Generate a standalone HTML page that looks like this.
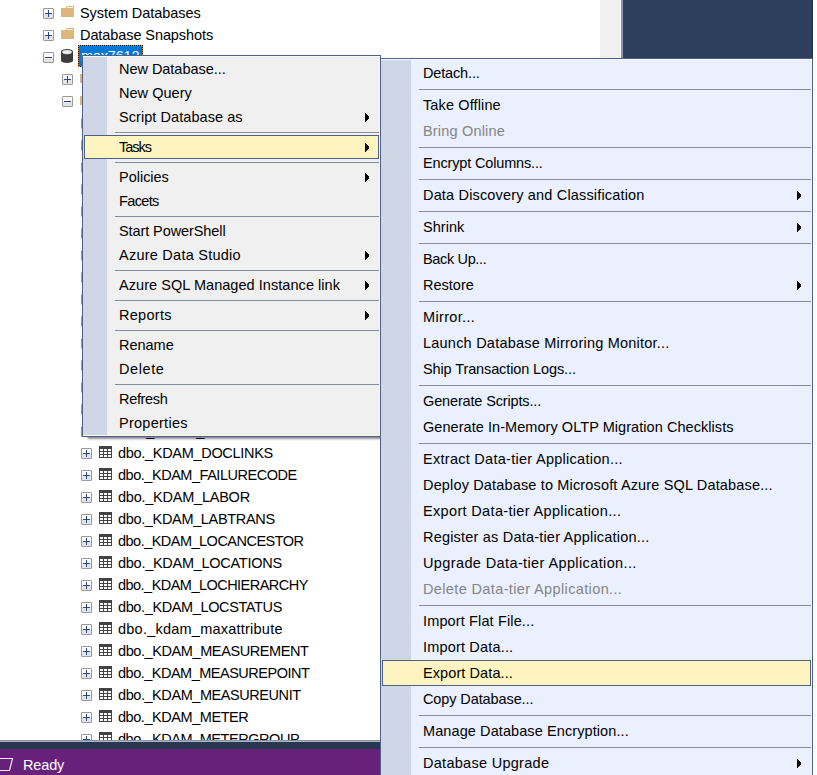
<!DOCTYPE html>
<html><head><meta charset="utf-8"><title>SSMS context menu</title><style>
*{margin:0;padding:0;box-sizing:border-box}
html,body{width:817px;height:775px;overflow:hidden;background:#fff}
body{position:relative;font-family:"Liberation Sans", sans-serif;font-size:14.5px;color:#000}
.a{position:absolute}
.t{position:absolute;white-space:nowrap;line-height:22px;height:22px}
.box{position:absolute;width:11px;height:11px;border:1px solid #999;border-radius:1px;background:linear-gradient(#fff 0,#fff 45%,#e4e4e4 55%,#e4e4e4 100%)}
.box i{position:absolute;background:#2a4690}
.fold{position:absolute;width:13px;height:11px}
.mi{position:absolute;white-space:nowrap}
.sep{position:absolute;height:1px;background:#838c9e}
.arr{position:absolute;width:0;height:0;border-top:4.5px solid transparent;border-bottom:4.5px solid transparent;border-left:5px solid #000}
</style></head>
<body>
<div class="a" style="left:0;top:0;width:600px;height:740px;background:#fff"></div>
<div class="a" style="left:600px;top:0;width:20px;height:740px;background:#f0f0f0"></div>
<div class="a" style="left:620px;top:0;width:1px;height:740px;background:#fff"></div>
<div class="a" style="left:621px;top:0;width:1px;height:740px;background:#878d98"></div>
<div class="a" style="left:622px;top:0;width:1px;height:740px;background:#8d9cc0"></div>
<div class="a" style="left:623px;top:0;width:190px;height:740px;background:#2e3f5e"></div>
<div class="a" style="left:812px;top:0;width:1px;height:58px;background:#213252"></div>
<div class="a" style="left:813px;top:0;width:4px;height:775px;background:#fff"></div>
<div class="a" style="left:0;top:740px;width:813px;height:1px;background:#8c929d"></div>
<div class="a" style="left:0;top:741px;width:813px;height:1px;background:#a9b5cb"></div>
<div class="a" style="left:0;top:742px;width:813px;height:7px;background:#283852"></div>
<div class="a" style="left:0;top:749px;width:813px;height:26px;background:#68217a"></div>
<svg class="a" style="left:0;top:757px" width="16" height="16"><path d="M-2 1.5 H12.5 L9.5 13.5 H-2" fill="none" stroke="#f3e6f6" stroke-width="1.2"/></svg>
<div class="t" style="left:23px;top:754px;color:#fff;letter-spacing:-0.156px;">Ready</div>
<div class="a" style="left:0;top:0;width:600px;height:740px;overflow:hidden">
<div class="box" style="left:43px;top:8px"><i style="left:1px;top:4px;width:7px;height:1px"></i><i style="left:4px;top:1px;width:1px;height:7px"></i></div>
<svg class="a" style="left:61px;top:6px" width="13" height="11"><path d="M0 2 H4.6 L5.6 0 H13 V11 H0 Z" fill="#dcb67a"/><rect x="6" y="1" width="6" height="1" fill="#fbf6ee"/></svg>
<div class="t" style="left:80px;top:2px;letter-spacing:-0.071px;">System Databases</div>
<div class="box" style="left:43px;top:30px"><i style="left:1px;top:4px;width:7px;height:1px"></i><i style="left:4px;top:1px;width:1px;height:7px"></i></div>
<svg class="a" style="left:61px;top:28px" width="13" height="11"><path d="M0 2 H4.6 L5.6 0 H13 V11 H0 Z" fill="#dcb67a"/><rect x="6" y="1" width="6" height="1" fill="#fbf6ee"/></svg>
<div class="t" style="left:80px;top:24px;letter-spacing:-0.086px;">Database Snapshots</div>
<div class="box" style="left:43px;top:52px"><i style="left:1px;top:4px;width:7px;height:1px"></i></div>
<svg class="a" style="left:61px;top:49px" width="12" height="14"><path d="M0 2.6 A6 2.6 0 0 1 12 2.6 V11.4 A6 2.6 0 0 1 0 11.4 Z" fill="#3c3c3c"/><ellipse cx="6" cy="3.1" rx="4.9" ry="2.1" fill="#ececec"/></svg>
<div class="a" style="left:78px;top:45px;width:65px;height:22px;background:#0078d7"></div>
<div class="a" style="left:78px;top:45px;width:65px;height:1px;background:repeating-linear-gradient(to right,#000 0,#000 1px,#ff8c00 1px,#ff8c00 2px)"></div>
<div class="a" style="left:78px;top:66px;width:65px;height:1px;background:repeating-linear-gradient(to right,#000 0,#000 1px,#ff8c00 1px,#ff8c00 2px)"></div>
<div class="a" style="left:78px;top:45px;width:1px;height:22px;background:repeating-linear-gradient(to bottom,#000 0,#000 1px,#ff8c00 1px,#ff8c00 2px)"></div>
<div class="a" style="left:142px;top:45px;width:1px;height:22px;background:repeating-linear-gradient(to bottom,#000 0,#000 1px,#ff8c00 1px,#ff8c00 2px)"></div>
<div class="t" style="left:81px;top:45px;color:#fff;letter-spacing:-0.2px">max7612</div>
<div class="box" style="left:62px;top:74px"><i style="left:1px;top:4px;width:7px;height:1px"></i><i style="left:4px;top:1px;width:1px;height:7px"></i></div>
<svg class="a" style="left:80px;top:72px" width="13" height="11"><path d="M0 2 H4.6 L5.6 0 H13 V11 H0 Z" fill="#dcb67a"/><rect x="6" y="1" width="6" height="1" fill="#fbf6ee"/></svg>
<div class="box" style="left:62px;top:96px"><i style="left:1px;top:4px;width:7px;height:1px"></i></div>
<svg class="a" style="left:80px;top:94px" width="13" height="11"><path d="M0 2 H4.6 L5.6 0 H13 V11 H0 Z" fill="#dcb67a"/><rect x="6" y="1" width="6" height="1" fill="#fbf6ee"/></svg>
<div class="box" style="left:81px;top:118px"><i style="left:1px;top:4px;width:7px;height:1px"></i><i style="left:4px;top:1px;width:1px;height:7px"></i></div>
<svg class="a" style="left:99px;top:116px" width="13" height="12"><rect width="13" height="12" fill="#424242"/><rect x="1" y="3" width="3" height="2" fill="#fff"/><rect x="5" y="3" width="3" height="2" fill="#fff"/><rect x="9" y="3" width="3" height="2" fill="#fff"/><rect x="1" y="6" width="3" height="2" fill="#fff"/><rect x="5" y="6" width="3" height="2" fill="#fff"/><rect x="9" y="6" width="3" height="2" fill="#fff"/><rect x="1" y="9" width="3" height="2" fill="#fff"/><rect x="5" y="9" width="3" height="2" fill="#fff"/><rect x="9" y="9" width="3" height="2" fill="#fff"/></svg>
<div class="t" style="left:118px;top:112px;">System Tables</div>
<div class="box" style="left:81px;top:140px"><i style="left:1px;top:4px;width:7px;height:1px"></i><i style="left:4px;top:1px;width:1px;height:7px"></i></div>
<svg class="a" style="left:99px;top:138px" width="13" height="12"><rect width="13" height="12" fill="#424242"/><rect x="1" y="3" width="3" height="2" fill="#fff"/><rect x="5" y="3" width="3" height="2" fill="#fff"/><rect x="9" y="3" width="3" height="2" fill="#fff"/><rect x="1" y="6" width="3" height="2" fill="#fff"/><rect x="5" y="6" width="3" height="2" fill="#fff"/><rect x="9" y="6" width="3" height="2" fill="#fff"/><rect x="1" y="9" width="3" height="2" fill="#fff"/><rect x="5" y="9" width="3" height="2" fill="#fff"/><rect x="9" y="9" width="3" height="2" fill="#fff"/></svg>
<div class="t" style="left:118px;top:134px;">FileTables</div>
<div class="box" style="left:81px;top:162px"><i style="left:1px;top:4px;width:7px;height:1px"></i><i style="left:4px;top:1px;width:1px;height:7px"></i></div>
<svg class="a" style="left:99px;top:160px" width="13" height="12"><rect width="13" height="12" fill="#424242"/><rect x="1" y="3" width="3" height="2" fill="#fff"/><rect x="5" y="3" width="3" height="2" fill="#fff"/><rect x="9" y="3" width="3" height="2" fill="#fff"/><rect x="1" y="6" width="3" height="2" fill="#fff"/><rect x="5" y="6" width="3" height="2" fill="#fff"/><rect x="9" y="6" width="3" height="2" fill="#fff"/><rect x="1" y="9" width="3" height="2" fill="#fff"/><rect x="5" y="9" width="3" height="2" fill="#fff"/><rect x="9" y="9" width="3" height="2" fill="#fff"/></svg>
<div class="t" style="left:118px;top:156px;">External Tables</div>
<div class="box" style="left:81px;top:184px"><i style="left:1px;top:4px;width:7px;height:1px"></i><i style="left:4px;top:1px;width:1px;height:7px"></i></div>
<svg class="a" style="left:99px;top:182px" width="13" height="12"><rect width="13" height="12" fill="#424242"/><rect x="1" y="3" width="3" height="2" fill="#fff"/><rect x="5" y="3" width="3" height="2" fill="#fff"/><rect x="9" y="3" width="3" height="2" fill="#fff"/><rect x="1" y="6" width="3" height="2" fill="#fff"/><rect x="5" y="6" width="3" height="2" fill="#fff"/><rect x="9" y="6" width="3" height="2" fill="#fff"/><rect x="1" y="9" width="3" height="2" fill="#fff"/><rect x="5" y="9" width="3" height="2" fill="#fff"/><rect x="9" y="9" width="3" height="2" fill="#fff"/></svg>
<div class="t" style="left:118px;top:178px;">Graph Tables</div>
<div class="box" style="left:81px;top:206px"><i style="left:1px;top:4px;width:7px;height:1px"></i><i style="left:4px;top:1px;width:1px;height:7px"></i></div>
<svg class="a" style="left:99px;top:204px" width="13" height="12"><rect width="13" height="12" fill="#424242"/><rect x="1" y="3" width="3" height="2" fill="#fff"/><rect x="5" y="3" width="3" height="2" fill="#fff"/><rect x="9" y="3" width="3" height="2" fill="#fff"/><rect x="1" y="6" width="3" height="2" fill="#fff"/><rect x="5" y="6" width="3" height="2" fill="#fff"/><rect x="9" y="6" width="3" height="2" fill="#fff"/><rect x="1" y="9" width="3" height="2" fill="#fff"/><rect x="5" y="9" width="3" height="2" fill="#fff"/><rect x="9" y="9" width="3" height="2" fill="#fff"/></svg>
<div class="t" style="left:118px;top:200px;">dbo._KDAM_ASSET</div>
<div class="box" style="left:81px;top:228px"><i style="left:1px;top:4px;width:7px;height:1px"></i><i style="left:4px;top:1px;width:1px;height:7px"></i></div>
<svg class="a" style="left:99px;top:226px" width="13" height="12"><rect width="13" height="12" fill="#424242"/><rect x="1" y="3" width="3" height="2" fill="#fff"/><rect x="5" y="3" width="3" height="2" fill="#fff"/><rect x="9" y="3" width="3" height="2" fill="#fff"/><rect x="1" y="6" width="3" height="2" fill="#fff"/><rect x="5" y="6" width="3" height="2" fill="#fff"/><rect x="9" y="6" width="3" height="2" fill="#fff"/><rect x="1" y="9" width="3" height="2" fill="#fff"/><rect x="5" y="9" width="3" height="2" fill="#fff"/><rect x="9" y="9" width="3" height="2" fill="#fff"/></svg>
<div class="t" style="left:118px;top:222px;">dbo._KDAM_ASSETATTRIBUTE</div>
<div class="box" style="left:81px;top:250px"><i style="left:1px;top:4px;width:7px;height:1px"></i><i style="left:4px;top:1px;width:1px;height:7px"></i></div>
<svg class="a" style="left:99px;top:248px" width="13" height="12"><rect width="13" height="12" fill="#424242"/><rect x="1" y="3" width="3" height="2" fill="#fff"/><rect x="5" y="3" width="3" height="2" fill="#fff"/><rect x="9" y="3" width="3" height="2" fill="#fff"/><rect x="1" y="6" width="3" height="2" fill="#fff"/><rect x="5" y="6" width="3" height="2" fill="#fff"/><rect x="9" y="6" width="3" height="2" fill="#fff"/><rect x="1" y="9" width="3" height="2" fill="#fff"/><rect x="5" y="9" width="3" height="2" fill="#fff"/><rect x="9" y="9" width="3" height="2" fill="#fff"/></svg>
<div class="t" style="left:118px;top:244px;">dbo._KDAM_ASSETMETER</div>
<div class="box" style="left:81px;top:272px"><i style="left:1px;top:4px;width:7px;height:1px"></i><i style="left:4px;top:1px;width:1px;height:7px"></i></div>
<svg class="a" style="left:99px;top:270px" width="13" height="12"><rect width="13" height="12" fill="#424242"/><rect x="1" y="3" width="3" height="2" fill="#fff"/><rect x="5" y="3" width="3" height="2" fill="#fff"/><rect x="9" y="3" width="3" height="2" fill="#fff"/><rect x="1" y="6" width="3" height="2" fill="#fff"/><rect x="5" y="6" width="3" height="2" fill="#fff"/><rect x="9" y="6" width="3" height="2" fill="#fff"/><rect x="1" y="9" width="3" height="2" fill="#fff"/><rect x="5" y="9" width="3" height="2" fill="#fff"/><rect x="9" y="9" width="3" height="2" fill="#fff"/></svg>
<div class="t" style="left:118px;top:266px;">dbo._KDAM_ASSETSPEC</div>
<div class="box" style="left:81px;top:294px"><i style="left:1px;top:4px;width:7px;height:1px"></i><i style="left:4px;top:1px;width:1px;height:7px"></i></div>
<svg class="a" style="left:99px;top:292px" width="13" height="12"><rect width="13" height="12" fill="#424242"/><rect x="1" y="3" width="3" height="2" fill="#fff"/><rect x="5" y="3" width="3" height="2" fill="#fff"/><rect x="9" y="3" width="3" height="2" fill="#fff"/><rect x="1" y="6" width="3" height="2" fill="#fff"/><rect x="5" y="6" width="3" height="2" fill="#fff"/><rect x="9" y="6" width="3" height="2" fill="#fff"/><rect x="1" y="9" width="3" height="2" fill="#fff"/><rect x="5" y="9" width="3" height="2" fill="#fff"/><rect x="9" y="9" width="3" height="2" fill="#fff"/></svg>
<div class="t" style="left:118px;top:288px;">dbo._KDAM_ASSETSTATUS</div>
<div class="box" style="left:81px;top:316px"><i style="left:1px;top:4px;width:7px;height:1px"></i><i style="left:4px;top:1px;width:1px;height:7px"></i></div>
<svg class="a" style="left:99px;top:314px" width="13" height="12"><rect width="13" height="12" fill="#424242"/><rect x="1" y="3" width="3" height="2" fill="#fff"/><rect x="5" y="3" width="3" height="2" fill="#fff"/><rect x="9" y="3" width="3" height="2" fill="#fff"/><rect x="1" y="6" width="3" height="2" fill="#fff"/><rect x="5" y="6" width="3" height="2" fill="#fff"/><rect x="9" y="6" width="3" height="2" fill="#fff"/><rect x="1" y="9" width="3" height="2" fill="#fff"/><rect x="5" y="9" width="3" height="2" fill="#fff"/><rect x="9" y="9" width="3" height="2" fill="#fff"/></svg>
<div class="t" style="left:118px;top:310px;">dbo._KDAM_CLASSSPEC</div>
<div class="box" style="left:81px;top:338px"><i style="left:1px;top:4px;width:7px;height:1px"></i><i style="left:4px;top:1px;width:1px;height:7px"></i></div>
<svg class="a" style="left:99px;top:336px" width="13" height="12"><rect width="13" height="12" fill="#424242"/><rect x="1" y="3" width="3" height="2" fill="#fff"/><rect x="5" y="3" width="3" height="2" fill="#fff"/><rect x="9" y="3" width="3" height="2" fill="#fff"/><rect x="1" y="6" width="3" height="2" fill="#fff"/><rect x="5" y="6" width="3" height="2" fill="#fff"/><rect x="9" y="6" width="3" height="2" fill="#fff"/><rect x="1" y="9" width="3" height="2" fill="#fff"/><rect x="5" y="9" width="3" height="2" fill="#fff"/><rect x="9" y="9" width="3" height="2" fill="#fff"/></svg>
<div class="t" style="left:118px;top:332px;">dbo._KDAM_CLASSSTRUCTURE</div>
<div class="box" style="left:81px;top:360px"><i style="left:1px;top:4px;width:7px;height:1px"></i><i style="left:4px;top:1px;width:1px;height:7px"></i></div>
<svg class="a" style="left:99px;top:358px" width="13" height="12"><rect width="13" height="12" fill="#424242"/><rect x="1" y="3" width="3" height="2" fill="#fff"/><rect x="5" y="3" width="3" height="2" fill="#fff"/><rect x="9" y="3" width="3" height="2" fill="#fff"/><rect x="1" y="6" width="3" height="2" fill="#fff"/><rect x="5" y="6" width="3" height="2" fill="#fff"/><rect x="9" y="6" width="3" height="2" fill="#fff"/><rect x="1" y="9" width="3" height="2" fill="#fff"/><rect x="5" y="9" width="3" height="2" fill="#fff"/><rect x="9" y="9" width="3" height="2" fill="#fff"/></svg>
<div class="t" style="left:118px;top:354px;">dbo._KDAM_COMPANIES</div>
<div class="box" style="left:81px;top:382px"><i style="left:1px;top:4px;width:7px;height:1px"></i><i style="left:4px;top:1px;width:1px;height:7px"></i></div>
<svg class="a" style="left:99px;top:380px" width="13" height="12"><rect width="13" height="12" fill="#424242"/><rect x="1" y="3" width="3" height="2" fill="#fff"/><rect x="5" y="3" width="3" height="2" fill="#fff"/><rect x="9" y="3" width="3" height="2" fill="#fff"/><rect x="1" y="6" width="3" height="2" fill="#fff"/><rect x="5" y="6" width="3" height="2" fill="#fff"/><rect x="9" y="6" width="3" height="2" fill="#fff"/><rect x="1" y="9" width="3" height="2" fill="#fff"/><rect x="5" y="9" width="3" height="2" fill="#fff"/><rect x="9" y="9" width="3" height="2" fill="#fff"/></svg>
<div class="t" style="left:118px;top:376px;">dbo._KDAM_CRAFT</div>
<div class="box" style="left:81px;top:404px"><i style="left:1px;top:4px;width:7px;height:1px"></i><i style="left:4px;top:1px;width:1px;height:7px"></i></div>
<svg class="a" style="left:99px;top:402px" width="13" height="12"><rect width="13" height="12" fill="#424242"/><rect x="1" y="3" width="3" height="2" fill="#fff"/><rect x="5" y="3" width="3" height="2" fill="#fff"/><rect x="9" y="3" width="3" height="2" fill="#fff"/><rect x="1" y="6" width="3" height="2" fill="#fff"/><rect x="5" y="6" width="3" height="2" fill="#fff"/><rect x="9" y="6" width="3" height="2" fill="#fff"/><rect x="1" y="9" width="3" height="2" fill="#fff"/><rect x="5" y="9" width="3" height="2" fill="#fff"/><rect x="9" y="9" width="3" height="2" fill="#fff"/></svg>
<div class="t" style="left:118px;top:398px;">dbo._KDAM_DOCINFO</div>
<div class="box" style="left:81px;top:426px"><i style="left:1px;top:4px;width:7px;height:1px"></i><i style="left:4px;top:1px;width:1px;height:7px"></i></div>
<svg class="a" style="left:99px;top:424px" width="13" height="12"><rect width="13" height="12" fill="#424242"/><rect x="1" y="3" width="3" height="2" fill="#fff"/><rect x="5" y="3" width="3" height="2" fill="#fff"/><rect x="9" y="3" width="3" height="2" fill="#fff"/><rect x="1" y="6" width="3" height="2" fill="#fff"/><rect x="5" y="6" width="3" height="2" fill="#fff"/><rect x="9" y="6" width="3" height="2" fill="#fff"/><rect x="1" y="9" width="3" height="2" fill="#fff"/><rect x="5" y="9" width="3" height="2" fill="#fff"/><rect x="9" y="9" width="3" height="2" fill="#fff"/></svg>
<div class="t" style="left:118px;top:420px;">dbo._KDAM_DOCINFOTEXT</div>
<div class="box" style="left:81px;top:448px"><i style="left:1px;top:4px;width:7px;height:1px"></i><i style="left:4px;top:1px;width:1px;height:7px"></i></div>
<svg class="a" style="left:99px;top:446px" width="13" height="12"><rect width="13" height="12" fill="#424242"/><rect x="1" y="3" width="3" height="2" fill="#fff"/><rect x="5" y="3" width="3" height="2" fill="#fff"/><rect x="9" y="3" width="3" height="2" fill="#fff"/><rect x="1" y="6" width="3" height="2" fill="#fff"/><rect x="5" y="6" width="3" height="2" fill="#fff"/><rect x="9" y="6" width="3" height="2" fill="#fff"/><rect x="1" y="9" width="3" height="2" fill="#fff"/><rect x="5" y="9" width="3" height="2" fill="#fff"/><rect x="9" y="9" width="3" height="2" fill="#fff"/></svg>
<div class="t" style="left:118px;top:442px;letter-spacing:-0.303px;">dbo._KDAM_DOCLINKS</div>
<div class="box" style="left:81px;top:470px"><i style="left:1px;top:4px;width:7px;height:1px"></i><i style="left:4px;top:1px;width:1px;height:7px"></i></div>
<svg class="a" style="left:99px;top:468px" width="13" height="12"><rect width="13" height="12" fill="#424242"/><rect x="1" y="3" width="3" height="2" fill="#fff"/><rect x="5" y="3" width="3" height="2" fill="#fff"/><rect x="9" y="3" width="3" height="2" fill="#fff"/><rect x="1" y="6" width="3" height="2" fill="#fff"/><rect x="5" y="6" width="3" height="2" fill="#fff"/><rect x="9" y="6" width="3" height="2" fill="#fff"/><rect x="1" y="9" width="3" height="2" fill="#fff"/><rect x="5" y="9" width="3" height="2" fill="#fff"/><rect x="9" y="9" width="3" height="2" fill="#fff"/></svg>
<div class="t" style="left:118px;top:464px;letter-spacing:-0.468px;">dbo._KDAM_FAILURECODE</div>
<div class="box" style="left:81px;top:492px"><i style="left:1px;top:4px;width:7px;height:1px"></i><i style="left:4px;top:1px;width:1px;height:7px"></i></div>
<svg class="a" style="left:99px;top:490px" width="13" height="12"><rect width="13" height="12" fill="#424242"/><rect x="1" y="3" width="3" height="2" fill="#fff"/><rect x="5" y="3" width="3" height="2" fill="#fff"/><rect x="9" y="3" width="3" height="2" fill="#fff"/><rect x="1" y="6" width="3" height="2" fill="#fff"/><rect x="5" y="6" width="3" height="2" fill="#fff"/><rect x="9" y="6" width="3" height="2" fill="#fff"/><rect x="1" y="9" width="3" height="2" fill="#fff"/><rect x="5" y="9" width="3" height="2" fill="#fff"/><rect x="9" y="9" width="3" height="2" fill="#fff"/></svg>
<div class="t" style="left:118px;top:486px;letter-spacing:-0.234px;">dbo._KDAM_LABOR</div>
<div class="box" style="left:81px;top:514px"><i style="left:1px;top:4px;width:7px;height:1px"></i><i style="left:4px;top:1px;width:1px;height:7px"></i></div>
<svg class="a" style="left:99px;top:512px" width="13" height="12"><rect width="13" height="12" fill="#424242"/><rect x="1" y="3" width="3" height="2" fill="#fff"/><rect x="5" y="3" width="3" height="2" fill="#fff"/><rect x="9" y="3" width="3" height="2" fill="#fff"/><rect x="1" y="6" width="3" height="2" fill="#fff"/><rect x="5" y="6" width="3" height="2" fill="#fff"/><rect x="9" y="6" width="3" height="2" fill="#fff"/><rect x="1" y="9" width="3" height="2" fill="#fff"/><rect x="5" y="9" width="3" height="2" fill="#fff"/><rect x="9" y="9" width="3" height="2" fill="#fff"/></svg>
<div class="t" style="left:118px;top:508px;letter-spacing:-0.337px;">dbo._KDAM_LABTRANS</div>
<div class="box" style="left:81px;top:536px"><i style="left:1px;top:4px;width:7px;height:1px"></i><i style="left:4px;top:1px;width:1px;height:7px"></i></div>
<svg class="a" style="left:99px;top:534px" width="13" height="12"><rect width="13" height="12" fill="#424242"/><rect x="1" y="3" width="3" height="2" fill="#fff"/><rect x="5" y="3" width="3" height="2" fill="#fff"/><rect x="9" y="3" width="3" height="2" fill="#fff"/><rect x="1" y="6" width="3" height="2" fill="#fff"/><rect x="5" y="6" width="3" height="2" fill="#fff"/><rect x="9" y="6" width="3" height="2" fill="#fff"/><rect x="1" y="9" width="3" height="2" fill="#fff"/><rect x="5" y="9" width="3" height="2" fill="#fff"/><rect x="9" y="9" width="3" height="2" fill="#fff"/></svg>
<div class="t" style="left:118px;top:530px;letter-spacing:-0.517px;">dbo._KDAM_LOCANCESTOR</div>
<div class="box" style="left:81px;top:558px"><i style="left:1px;top:4px;width:7px;height:1px"></i><i style="left:4px;top:1px;width:1px;height:7px"></i></div>
<svg class="a" style="left:99px;top:556px" width="13" height="12"><rect width="13" height="12" fill="#424242"/><rect x="1" y="3" width="3" height="2" fill="#fff"/><rect x="5" y="3" width="3" height="2" fill="#fff"/><rect x="9" y="3" width="3" height="2" fill="#fff"/><rect x="1" y="6" width="3" height="2" fill="#fff"/><rect x="5" y="6" width="3" height="2" fill="#fff"/><rect x="9" y="6" width="3" height="2" fill="#fff"/><rect x="1" y="9" width="3" height="2" fill="#fff"/><rect x="5" y="9" width="3" height="2" fill="#fff"/><rect x="9" y="9" width="3" height="2" fill="#fff"/></svg>
<div class="t" style="left:118px;top:552px;letter-spacing:-0.270px;">dbo._KDAM_LOCATIONS</div>
<div class="box" style="left:81px;top:580px"><i style="left:1px;top:4px;width:7px;height:1px"></i><i style="left:4px;top:1px;width:1px;height:7px"></i></div>
<svg class="a" style="left:99px;top:578px" width="13" height="12"><rect width="13" height="12" fill="#424242"/><rect x="1" y="3" width="3" height="2" fill="#fff"/><rect x="5" y="3" width="3" height="2" fill="#fff"/><rect x="9" y="3" width="3" height="2" fill="#fff"/><rect x="1" y="6" width="3" height="2" fill="#fff"/><rect x="5" y="6" width="3" height="2" fill="#fff"/><rect x="9" y="6" width="3" height="2" fill="#fff"/><rect x="1" y="9" width="3" height="2" fill="#fff"/><rect x="5" y="9" width="3" height="2" fill="#fff"/><rect x="9" y="9" width="3" height="2" fill="#fff"/></svg>
<div class="t" style="left:118px;top:574px;letter-spacing:-0.530px;">dbo._KDAM_LOCHIERARCHY</div>
<div class="box" style="left:81px;top:602px"><i style="left:1px;top:4px;width:7px;height:1px"></i><i style="left:4px;top:1px;width:1px;height:7px"></i></div>
<svg class="a" style="left:99px;top:600px" width="13" height="12"><rect width="13" height="12" fill="#424242"/><rect x="1" y="3" width="3" height="2" fill="#fff"/><rect x="5" y="3" width="3" height="2" fill="#fff"/><rect x="9" y="3" width="3" height="2" fill="#fff"/><rect x="1" y="6" width="3" height="2" fill="#fff"/><rect x="5" y="6" width="3" height="2" fill="#fff"/><rect x="9" y="6" width="3" height="2" fill="#fff"/><rect x="1" y="9" width="3" height="2" fill="#fff"/><rect x="5" y="9" width="3" height="2" fill="#fff"/><rect x="9" y="9" width="3" height="2" fill="#fff"/></svg>
<div class="t" style="left:118px;top:596px;letter-spacing:-0.378px;">dbo._KDAM_LOCSTATUS</div>
<div class="box" style="left:81px;top:624px"><i style="left:1px;top:4px;width:7px;height:1px"></i><i style="left:4px;top:1px;width:1px;height:7px"></i></div>
<svg class="a" style="left:99px;top:622px" width="13" height="12"><rect width="13" height="12" fill="#424242"/><rect x="1" y="3" width="3" height="2" fill="#fff"/><rect x="5" y="3" width="3" height="2" fill="#fff"/><rect x="9" y="3" width="3" height="2" fill="#fff"/><rect x="1" y="6" width="3" height="2" fill="#fff"/><rect x="5" y="6" width="3" height="2" fill="#fff"/><rect x="9" y="6" width="3" height="2" fill="#fff"/><rect x="1" y="9" width="3" height="2" fill="#fff"/><rect x="5" y="9" width="3" height="2" fill="#fff"/><rect x="9" y="9" width="3" height="2" fill="#fff"/></svg>
<div class="t" style="left:118px;top:618px;letter-spacing:0.233px;">dbo._kdam_maxattribute</div>
<div class="box" style="left:81px;top:646px"><i style="left:1px;top:4px;width:7px;height:1px"></i><i style="left:4px;top:1px;width:1px;height:7px"></i></div>
<svg class="a" style="left:99px;top:644px" width="13" height="12"><rect width="13" height="12" fill="#424242"/><rect x="1" y="3" width="3" height="2" fill="#fff"/><rect x="5" y="3" width="3" height="2" fill="#fff"/><rect x="9" y="3" width="3" height="2" fill="#fff"/><rect x="1" y="6" width="3" height="2" fill="#fff"/><rect x="5" y="6" width="3" height="2" fill="#fff"/><rect x="9" y="6" width="3" height="2" fill="#fff"/><rect x="1" y="9" width="3" height="2" fill="#fff"/><rect x="5" y="9" width="3" height="2" fill="#fff"/><rect x="9" y="9" width="3" height="2" fill="#fff"/></svg>
<div class="t" style="left:118px;top:640px;letter-spacing:-0.405px;">dbo._KDAM_MEASUREMENT</div>
<div class="box" style="left:81px;top:668px"><i style="left:1px;top:4px;width:7px;height:1px"></i><i style="left:4px;top:1px;width:1px;height:7px"></i></div>
<svg class="a" style="left:99px;top:666px" width="13" height="12"><rect width="13" height="12" fill="#424242"/><rect x="1" y="3" width="3" height="2" fill="#fff"/><rect x="5" y="3" width="3" height="2" fill="#fff"/><rect x="9" y="3" width="3" height="2" fill="#fff"/><rect x="1" y="6" width="3" height="2" fill="#fff"/><rect x="5" y="6" width="3" height="2" fill="#fff"/><rect x="9" y="6" width="3" height="2" fill="#fff"/><rect x="1" y="9" width="3" height="2" fill="#fff"/><rect x="5" y="9" width="3" height="2" fill="#fff"/><rect x="9" y="9" width="3" height="2" fill="#fff"/></svg>
<div class="t" style="left:118px;top:662px;letter-spacing:-0.498px;">dbo._KDAM_MEASUREPOINT</div>
<div class="box" style="left:81px;top:690px"><i style="left:1px;top:4px;width:7px;height:1px"></i><i style="left:4px;top:1px;width:1px;height:7px"></i></div>
<svg class="a" style="left:99px;top:688px" width="13" height="12"><rect width="13" height="12" fill="#424242"/><rect x="1" y="3" width="3" height="2" fill="#fff"/><rect x="5" y="3" width="3" height="2" fill="#fff"/><rect x="9" y="3" width="3" height="2" fill="#fff"/><rect x="1" y="6" width="3" height="2" fill="#fff"/><rect x="5" y="6" width="3" height="2" fill="#fff"/><rect x="9" y="6" width="3" height="2" fill="#fff"/><rect x="1" y="9" width="3" height="2" fill="#fff"/><rect x="5" y="9" width="3" height="2" fill="#fff"/><rect x="9" y="9" width="3" height="2" fill="#fff"/></svg>
<div class="t" style="left:118px;top:684px;letter-spacing:-0.434px;">dbo._KDAM_MEASUREUNIT</div>
<div class="box" style="left:81px;top:712px"><i style="left:1px;top:4px;width:7px;height:1px"></i><i style="left:4px;top:1px;width:1px;height:7px"></i></div>
<svg class="a" style="left:99px;top:710px" width="13" height="12"><rect width="13" height="12" fill="#424242"/><rect x="1" y="3" width="3" height="2" fill="#fff"/><rect x="5" y="3" width="3" height="2" fill="#fff"/><rect x="9" y="3" width="3" height="2" fill="#fff"/><rect x="1" y="6" width="3" height="2" fill="#fff"/><rect x="5" y="6" width="3" height="2" fill="#fff"/><rect x="9" y="6" width="3" height="2" fill="#fff"/><rect x="1" y="9" width="3" height="2" fill="#fff"/><rect x="5" y="9" width="3" height="2" fill="#fff"/><rect x="9" y="9" width="3" height="2" fill="#fff"/></svg>
<div class="t" style="left:118px;top:706px;letter-spacing:-0.441px;">dbo._KDAM_METER</div>
<div class="box" style="left:81px;top:734px"><i style="left:1px;top:4px;width:7px;height:1px"></i><i style="left:4px;top:1px;width:1px;height:7px"></i></div>
<svg class="a" style="left:99px;top:732px" width="13" height="12"><rect width="13" height="12" fill="#424242"/><rect x="1" y="3" width="3" height="2" fill="#fff"/><rect x="5" y="3" width="3" height="2" fill="#fff"/><rect x="9" y="3" width="3" height="2" fill="#fff"/><rect x="1" y="6" width="3" height="2" fill="#fff"/><rect x="5" y="6" width="3" height="2" fill="#fff"/><rect x="9" y="6" width="3" height="2" fill="#fff"/><rect x="1" y="9" width="3" height="2" fill="#fff"/><rect x="5" y="9" width="3" height="2" fill="#fff"/><rect x="9" y="9" width="3" height="2" fill="#fff"/></svg>
<div class="t" style="left:118px;top:728px;letter-spacing:-0.450px;">dbo._KDAM_METERGROUP</div>
</div>
<div class="a" style="left:86px;top:437px;width:294px;height:4px;background:linear-gradient(rgba(0,0,0,.42) 0,rgba(0,0,0,.42) 1px,rgba(0,0,0,.30) 1px,rgba(0,0,0,.30) 2px,rgba(0,0,0,.13) 2px,rgba(0,0,0,.13) 3px,rgba(0,0,0,.04) 3px);-webkit-mask-image:linear-gradient(to right,transparent 0,#000 3px)"></div>
<div class="a" style="left:82px;top:55px;width:299px;height:382px;background:#f0f0f0;border:1px solid #4f6086"></div>
<div class="a" style="left:83px;top:56px;width:297px;height:380px;border:1px solid #f7f7f4;border-left:0"></div>
<div class="a" style="left:83px;top:57px;width:24px;height:378px;background:#cfd6e5"></div>
<div class="mi" style="left:119px;top:57px;line-height:24px;letter-spacing:-0.034px;">New Database...</div>
<div class="mi" style="left:119px;top:81px;line-height:24px;letter-spacing:0.035px;">New Query</div>
<div class="mi" style="left:119px;top:105px;line-height:24px;letter-spacing:0.063px;">Script Database as</div>
<svg class="a" style="left:365px;top:113px" width="5" height="9" shape-rendering="crispEdges"><path d="M0 0h1v9h-1z M1 1h1v7h-1z M2 2h1v5h-1z M3 3h1v3h-1z" fill="#000"/></svg>
<div class="sep" style="left:115px;top:132px;width:264px"></div>
<div class="a" style="left:84px;top:135px;width:295px;height:24px;background:#fdf4bf;border:1px solid #4f6086"></div>
<div class="mi" style="left:119px;top:135px;line-height:24px;letter-spacing:-1.000px;">Tasks</div>
<svg class="a" style="left:365px;top:143px" width="5" height="9" shape-rendering="crispEdges"><path d="M0 0h1v9h-1z M1 1h1v7h-1z M2 2h1v5h-1z M3 3h1v3h-1z" fill="#000"/></svg>
<div class="sep" style="left:115px;top:162px;width:264px"></div>
<div class="mi" style="left:119px;top:165px;line-height:24px;letter-spacing:-0.013px;">Policies</div>
<svg class="a" style="left:365px;top:173px" width="5" height="9" shape-rendering="crispEdges"><path d="M0 0h1v9h-1z M1 1h1v7h-1z M2 2h1v5h-1z M3 3h1v3h-1z" fill="#000"/></svg>
<div class="mi" style="left:119px;top:189px;line-height:24px;letter-spacing:-0.636px;">Facets</div>
<div class="sep" style="left:115px;top:216px;width:264px"></div>
<div class="mi" style="left:119px;top:219px;line-height:24px;letter-spacing:-0.090px;">Start PowerShell</div>
<div class="mi" style="left:119px;top:243px;line-height:24px;letter-spacing:0.242px;">Azure Data Studio</div>
<svg class="a" style="left:365px;top:251px" width="5" height="9" shape-rendering="crispEdges"><path d="M0 0h1v9h-1z M1 1h1v7h-1z M2 2h1v5h-1z M3 3h1v3h-1z" fill="#000"/></svg>
<div class="sep" style="left:115px;top:270px;width:264px"></div>
<div class="mi" style="left:119px;top:273px;line-height:24px;letter-spacing:0.049px;">Azure SQL Managed Instance link</div>
<svg class="a" style="left:365px;top:281px" width="5" height="9" shape-rendering="crispEdges"><path d="M0 0h1v9h-1z M1 1h1v7h-1z M2 2h1v5h-1z M3 3h1v3h-1z" fill="#000"/></svg>
<div class="sep" style="left:115px;top:300px;width:264px"></div>
<div class="mi" style="left:119px;top:303px;line-height:24px;letter-spacing:0.277px;">Reports</div>
<svg class="a" style="left:365px;top:311px" width="5" height="9" shape-rendering="crispEdges"><path d="M0 0h1v9h-1z M1 1h1v7h-1z M2 2h1v5h-1z M3 3h1v3h-1z" fill="#000"/></svg>
<div class="sep" style="left:115px;top:330px;width:264px"></div>
<div class="mi" style="left:119px;top:333px;line-height:24px;letter-spacing:-0.018px;">Rename</div>
<div class="mi" style="left:119px;top:357px;line-height:24px;letter-spacing:0.582px;">Delete</div>
<div class="sep" style="left:115px;top:384px;width:264px"></div>
<div class="mi" style="left:119px;top:387px;line-height:24px;letter-spacing:-0.323px;">Refresh</div>
<div class="mi" style="left:119px;top:411px;line-height:24px;letter-spacing:0.263px;">Properties</div>
<div class="a" style="left:380px;top:58px;width:433px;height:742px;background:#eaf0fd;border:1px solid #4f6086"></div>
<div class="a" style="left:381px;top:59px;width:431px;height:742px;border:1px solid #f5f8fe;border-left:0"></div>
<div class="a" style="left:381px;top:60px;width:30px;height:742px;background:#cfd6e5"></div>
<div class="mi" style="left:423px;top:60px;line-height:26px;color:#000;letter-spacing:-0.153px;">Detach...</div>
<div class="sep" style="left:419px;top:89px;width:392px"></div>
<div class="mi" style="left:423px;top:92px;line-height:26px;color:#000;letter-spacing:0.122px;">Take Offline</div>
<div class="mi" style="left:423px;top:118px;line-height:26px;color:#858585;letter-spacing:0.183px;">Bring Online</div>
<div class="sep" style="left:419px;top:147px;width:392px"></div>
<div class="mi" style="left:423px;top:150px;line-height:26px;color:#000;letter-spacing:-0.154px;">Encrypt Columns...</div>
<div class="sep" style="left:419px;top:179px;width:392px"></div>
<div class="mi" style="left:423px;top:182px;line-height:26px;color:#000;letter-spacing:0.169px;">Data Discovery and Classification</div>
<svg class="a" style="left:797px;top:191px" width="5" height="9" shape-rendering="crispEdges"><path d="M0 0h1v9h-1z M1 1h1v7h-1z M2 2h1v5h-1z M3 3h1v3h-1z" fill="#000"/></svg>
<div class="sep" style="left:419px;top:211px;width:392px"></div>
<div class="mi" style="left:423px;top:214px;line-height:26px;color:#000;letter-spacing:0.055px;">Shrink</div>
<svg class="a" style="left:797px;top:223px" width="5" height="9" shape-rendering="crispEdges"><path d="M0 0h1v9h-1z M1 1h1v7h-1z M2 2h1v5h-1z M3 3h1v3h-1z" fill="#000"/></svg>
<div class="sep" style="left:419px;top:243px;width:392px"></div>
<div class="mi" style="left:423px;top:246px;line-height:26px;color:#000;letter-spacing:-0.347px;">Back Up...</div>
<div class="mi" style="left:423px;top:272px;line-height:26px;color:#000;letter-spacing:0.015px;">Restore</div>
<svg class="a" style="left:797px;top:281px" width="5" height="9" shape-rendering="crispEdges"><path d="M0 0h1v9h-1z M1 1h1v7h-1z M2 2h1v5h-1z M3 3h1v3h-1z" fill="#000"/></svg>
<div class="sep" style="left:419px;top:301px;width:392px"></div>
<div class="mi" style="left:423px;top:304px;line-height:26px;color:#000;letter-spacing:0.341px;">Mirror...</div>
<div class="mi" style="left:423px;top:330px;line-height:26px;color:#000;letter-spacing:0.223px;">Launch Database Mirroring Monitor...</div>
<div class="mi" style="left:423px;top:356px;line-height:26px;color:#000;letter-spacing:-0.115px;">Ship Transaction Logs...</div>
<div class="sep" style="left:419px;top:385px;width:392px"></div>
<div class="mi" style="left:423px;top:388px;line-height:26px;color:#000;letter-spacing:-0.146px;">Generate Scripts...</div>
<div class="mi" style="left:423px;top:414px;line-height:26px;color:#000;letter-spacing:0.055px;">Generate In-Memory OLTP Migration Checklists</div>
<div class="sep" style="left:419px;top:443px;width:392px"></div>
<div class="mi" style="left:423px;top:446px;line-height:26px;color:#000;letter-spacing:0.276px;">Extract Data-tier Application...</div>
<div class="mi" style="left:423px;top:472px;line-height:26px;color:#000;letter-spacing:0.154px;">Deploy Database to Microsoft Azure SQL Database...</div>
<div class="mi" style="left:423px;top:498px;line-height:26px;color:#000;letter-spacing:0.338px;">Export Data-tier Application...</div>
<div class="mi" style="left:423px;top:524px;line-height:26px;color:#000;letter-spacing:0.200px;">Register as Data-tier Application...</div>
<div class="mi" style="left:423px;top:550px;line-height:26px;color:#000;letter-spacing:0.384px;">Upgrade Data-tier Application...</div>
<div class="mi" style="left:423px;top:576px;line-height:26px;color:#858585;letter-spacing:0.370px;">Delete Data-tier Application...</div>
<div class="sep" style="left:419px;top:605px;width:392px"></div>
<div class="mi" style="left:423px;top:608px;line-height:26px;color:#000;letter-spacing:0.135px;">Import Flat File...</div>
<div class="mi" style="left:423px;top:634px;line-height:26px;color:#000;letter-spacing:0.178px;">Import Data...</div>
<div class="a" style="left:382px;top:660px;width:429px;height:26px;background:#fdf4bf;border:1px solid #4f6086"></div>
<div class="mi" style="left:423px;top:660px;line-height:26px;color:#000;letter-spacing:0.089px;">Export Data...</div>
<div class="mi" style="left:423px;top:686px;line-height:26px;color:#000;letter-spacing:-0.103px;">Copy Database...</div>
<div class="sep" style="left:419px;top:715px;width:392px"></div>
<div class="mi" style="left:423px;top:718px;line-height:26px;color:#000;letter-spacing:0.091px;">Manage Database Encryption...</div>
<div class="sep" style="left:419px;top:747px;width:392px"></div>
<div class="mi" style="left:423px;top:750px;line-height:26px;color:#000;letter-spacing:0.284px;">Database Upgrade</div>
<svg class="a" style="left:797px;top:759px" width="5" height="9" shape-rendering="crispEdges"><path d="M0 0h1v9h-1z M1 1h1v7h-1z M2 2h1v5h-1z M3 3h1v3h-1z" fill="#000"/></svg>
</body></html>
